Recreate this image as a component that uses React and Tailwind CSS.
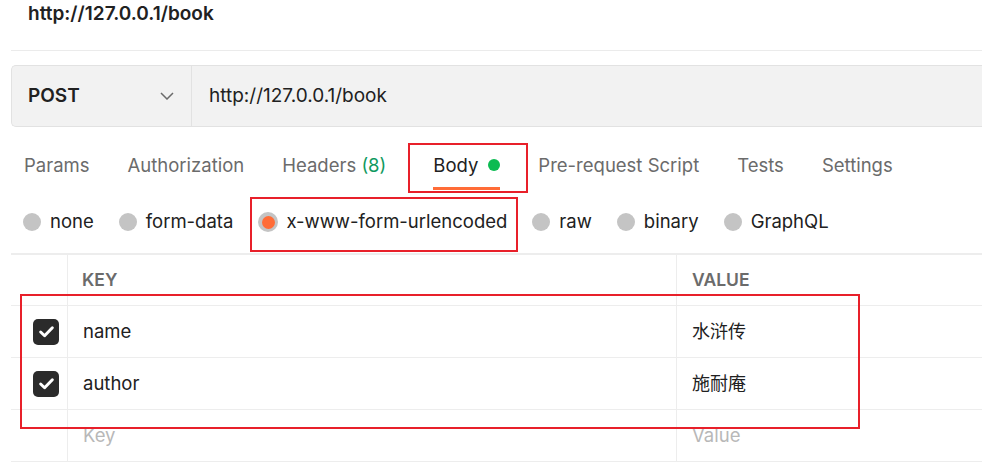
const tabs = [
  { name: 'Params' },
  { name: 'Authorization' },
  { name: 'Headers', count: '(8)' },
  { name: 'Body', active: true },
  { name: 'Pre-request Script' },
  { name: 'Tests' },
  { name: 'Settings' },
]

const bodyTypes = ['none', 'form-data', 'x-www-form-urlencoded', 'raw', 'binary', 'GraphQL']

const rows = [
  { key: 'name', value: '水浒传' },
  { key: 'author', value: '施耐庵' },
]

function Check() {
  return (
    <div className="flex h-[26px] w-[26px] items-center justify-center rounded-[5px] bg-[#2b2b2b]">
      <svg width="17" height="17" viewBox="0 0 16 16" fill="none">
        <path d="M2.5 8.5 L6.2 12 L13.5 4.5" stroke="#fff" strokeWidth="2.8" strokeLinecap="round" strokeLinejoin="round" />
      </svg>
    </div>
  )
}

function App() {
  return (
    <div
      className="h-[464px] w-[982px] overflow-hidden bg-white text-[#212121]"
      style={{ fontFamily: 'Inter, "Noto Sans CJK SC", sans-serif' }}
    >
      <div className="ml-[11px] h-[51px] border-b border-[#ebebeb] pl-[17px]">
        <h1 className="text-[19px] font-semibold leading-[28px]">http://127.0.0.1/book</h1>
      </div>

      <div className="ml-[11px] mt-[14px] flex h-[62px] rounded-l-[5px] border border-r-0 border-[#e2e2e2] bg-[#f2f2f2]">
        <div className="flex w-[180px] items-center justify-between border-r border-[#e2e2e2] pl-[16px] pr-[17px]">
          <span className="text-[19px] font-semibold">POST</span>
          <svg width="14" height="8" viewBox="0 0 14 8" fill="none">
            <path d="M1 1 L7 7 L13 1" stroke="#6b6b6b" strokeWidth="1.5" />
          </svg>
        </div>
        <div className="flex items-center pl-[17px] text-[19px]">http://127.0.0.1/book</div>
      </div>

      <div className="flex h-[66px] gap-[38px] pl-[24px] pt-[26px] text-[18.5px] leading-[24px]">
        {tabs.map((tab) =>
          tab.active ? (
            <div key={tab.name} className="relative ml-[9px]">
              <div className="flex items-center gap-[10px] text-[#212121]">
                {tab.name}
                <span className="h-[12px] w-[12px] rounded-full bg-[#0cbb52]" />
              </div>
              <div className="mt-[10px] h-[3px] bg-[#ff6c37]" />
              <div className="absolute left-[-25px] top-[-10px] h-[50px] w-[120px] border-2 border-[#e8202a]" />
            </div>
          ) : (
            <div key={tab.name} className="text-[#6b6b6b]">
              {tab.name}
              {tab.count && <span className="text-[#0f9960]"> {tab.count}</span>}
            </div>
          )
        )}
      </div>

      <div className="flex h-[60px] items-center gap-[25px] pb-[2px] pl-[23px] text-[18.5px]">
        {bodyTypes.map((t) =>
          t === 'x-www-form-urlencoded' ? (
            <div key={t} className="relative flex items-center gap-[8px]">
              <span className="flex h-[20px] w-[20px] items-center justify-center rounded-full bg-[#c4c4c4]">
                <span className="h-[13px] w-[13px] rounded-full bg-[#ff6c37]" />
              </span>
              {t}
              <div className="absolute left-[-8px] top-[-11px] h-[55px] w-[268px] border-2 border-[#e8202a]" />
            </div>
          ) : (
            <div key={t} className="flex items-center gap-[9px]">
              <span className="h-[18px] w-[18px] rounded-full bg-[#c4c4c4]" />
              {t}
            </div>
          )
        )}
      </div>

      <div className="relative ml-[11px] border-t-2 border-[#ededed]">
        <div className="grid grid-cols-[57px_609px_1fr]">
          <div className="h-[51px] border-b border-r border-[#ededed]" />
          <div className="flex h-[51px] items-center border-b border-r border-[#ededed] pl-[14px] text-[17.5px] font-semibold text-[#6b6b6b]">
            KEY
          </div>
          <div className="flex h-[51px] items-center border-b border-[#ededed] pl-[15px] text-[17.5px] font-semibold text-[#6b6b6b]">
            VALUE
          </div>
          {rows.map((r) => (
            <>
              <div key={r.key + 'c'} className="flex h-[52px] items-center border-b border-r border-[#ededed] pl-[22px]">
                <Check />
              </div>
              <div key={r.key + 'k'} className="flex h-[52px] items-center border-b border-r border-[#ededed] pl-[15px] text-[18.5px]">
                {r.key}
              </div>
              <div key={r.key + 'v'} className="flex h-[52px] items-center border-b border-[#ededed] pl-[15px] text-[18px]">
                {r.value}
              </div>
            </>
          ))}
          <div className="h-[52px] border-b border-r border-[#ededed]" />
          <div className="flex h-[52px] items-center border-b border-r border-[#ededed] pl-[15px] text-[18.5px] text-[#b8b8b8]">
            Key
          </div>
          <div className="flex h-[52px] items-center border-b border-[#ededed] pl-[15px] text-[18.5px] text-[#b8b8b8]">
            Value
          </div>
        </div>
        <div className="absolute left-[9px] top-[39px] h-[135px] w-[840px] border-2 border-[#e8202a]" />
      </div>
    </div>
  )
}

export default App
